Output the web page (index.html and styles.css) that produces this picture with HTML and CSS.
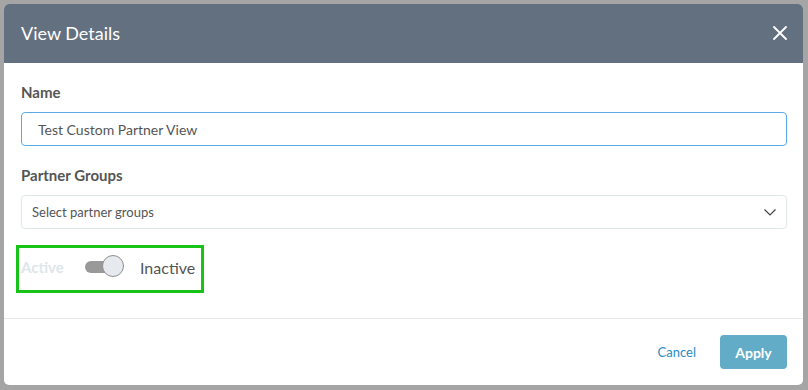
FILE: index.html
```html
<!DOCTYPE html>
<html lang="en">
<head>
    <meta charset="UTF-8">
    <meta name="viewport" content="width=device-width, initial-scale=1.0">
    <title>View Details</title>
    <link rel="stylesheet" href="styles.css">
</head>
<body>
    <div class="modal">
        <div class="modal-header">
            <h1>View Details</h1>
            <button class="close" type="button" aria-label="Close">
                <svg width="14" height="14" viewBox="0 0 14 14">
                    <path d="M1 1 L13 13 M13 1 L1 13" stroke="#fff" stroke-width="1.8" stroke-linecap="round"/>
                </svg>
            </button>
        </div>
        <div class="modal-body">
            <label class="field-label" for="name">Name</label>
            <input class="text-input" type="text" id="name" value="Test Custom Partner View">

            <label class="field-label groups-label">Partner Groups</label>
            <div class="select-box">
                <span>Select partner groups</span>
                <svg width="12" height="7" viewBox="0 0 12 7">
                    <polyline points="0.5,0.5 6,6 11.5,0.5" fill="none" stroke="#444" stroke-width="1.2"/>
                </svg>
            </div>

            <div class="status-row">
                <span class="status-off">Active</span>
                <span class="toggle"><span class="knob"></span></span>
                <span class="status-on">Inactive</span>
            </div>
        </div>
        <div class="modal-footer">
            <a href="#" class="cancel">Cancel</a>
            <button class="apply" type="button">Apply</button>
        </div>
    </div>
</body>
</html>
```

FILE: styles.css
```css
/* Modal styles */
body {
    font-family: Lato, "Open Sans", sans-serif;
    margin: 0;
    padding: 4px;
    background-color: #a5a5a5;
}

.modal {
    width: 799px;
    height: 381px;
    background-color: #fff;
    border-radius: 5px;
    overflow: hidden;
    display: flex;
    flex-direction: column;
}

.modal-header {
    height: 59px;
    box-sizing: border-box;
    padding: 0 16px 2px 17px;
    background-color: #637080;
    display: flex;
    align-items: center;
    justify-content: space-between;
}

.modal-header h1 {
    margin: 0;
    font-size: 18px;
    font-weight: normal;
    color: #fff;
}

.close {
    background: none;
    border: none;
    padding: 0;
    width: 14px;
    height: 14px;
    display: flex;
}

.modal-body {
    padding: 20px 16px 25px 17px;
    border-bottom: 1px solid #e9e9e9;
    display: flex;
    flex-direction: column;
}

.field-label {
    font-size: 15px;
    font-weight: bold;
    line-height: 18px;
    color: #555;
}

.groups-label {
    margin-top: 20px;
}

.text-input {
    margin-top: 11px;
    height: 34px;
    box-sizing: border-box;
    border: 1px solid #5aaae4;
    border-radius: 4px;
    padding: 0 16px;
    font-family: inherit;
    font-size: 14px;
    color: #555;
    outline: none;
}

.select-box {
    margin-top: 11px;
    height: 34px;
    box-sizing: border-box;
    border: 1px solid #dfe7e7;
    border-radius: 4px;
    padding: 0 10px 0 10px;
    display: flex;
    align-items: center;
    justify-content: space-between;
    font-size: 13px;
    color: #555;
}

.status-row {
    margin: 16px 0 0 -5px;
    width: 188px;
    height: 48px;
    box-sizing: border-box;
    border: 3px solid #17c317;
    padding: 0 0 4px 2px;
    display: flex;
    align-items: center;
}

.status-off {
    font-size: 15px;
    font-weight: bold;
    color: #dde6ea;
    width: 64px;
}

.toggle {
    position: relative;
    width: 32px;
    height: 12px;
    border-radius: 6px;
    background-color: #999;
    margin-right: 23px;
}

.knob {
    position: absolute;
    right: -7px;
    top: -6px;
    width: 20px;
    height: 20px;
    border-radius: 50%;
    background-color: #e6eaee;
    border: 1px solid #8f8f8f;
}

.status-on {
    font-size: 16px;
    color: #555;
}

.modal-footer {
    flex: 1;
    display: flex;
    align-items: center;
    justify-content: flex-end;
    padding: 0 16px;
}

.cancel {
    font-size: 13px;
    color: #2b8cc0;
    text-decoration: none;
    margin-right: 24px;
}

.apply {
    width: 67px;
    height: 34px;
    border: none;
    border-radius: 4px;
    background-color: #63acc8;
    color: #fff;
    font-family: inherit;
    font-size: 14px;
    font-weight: bold;
}
```
